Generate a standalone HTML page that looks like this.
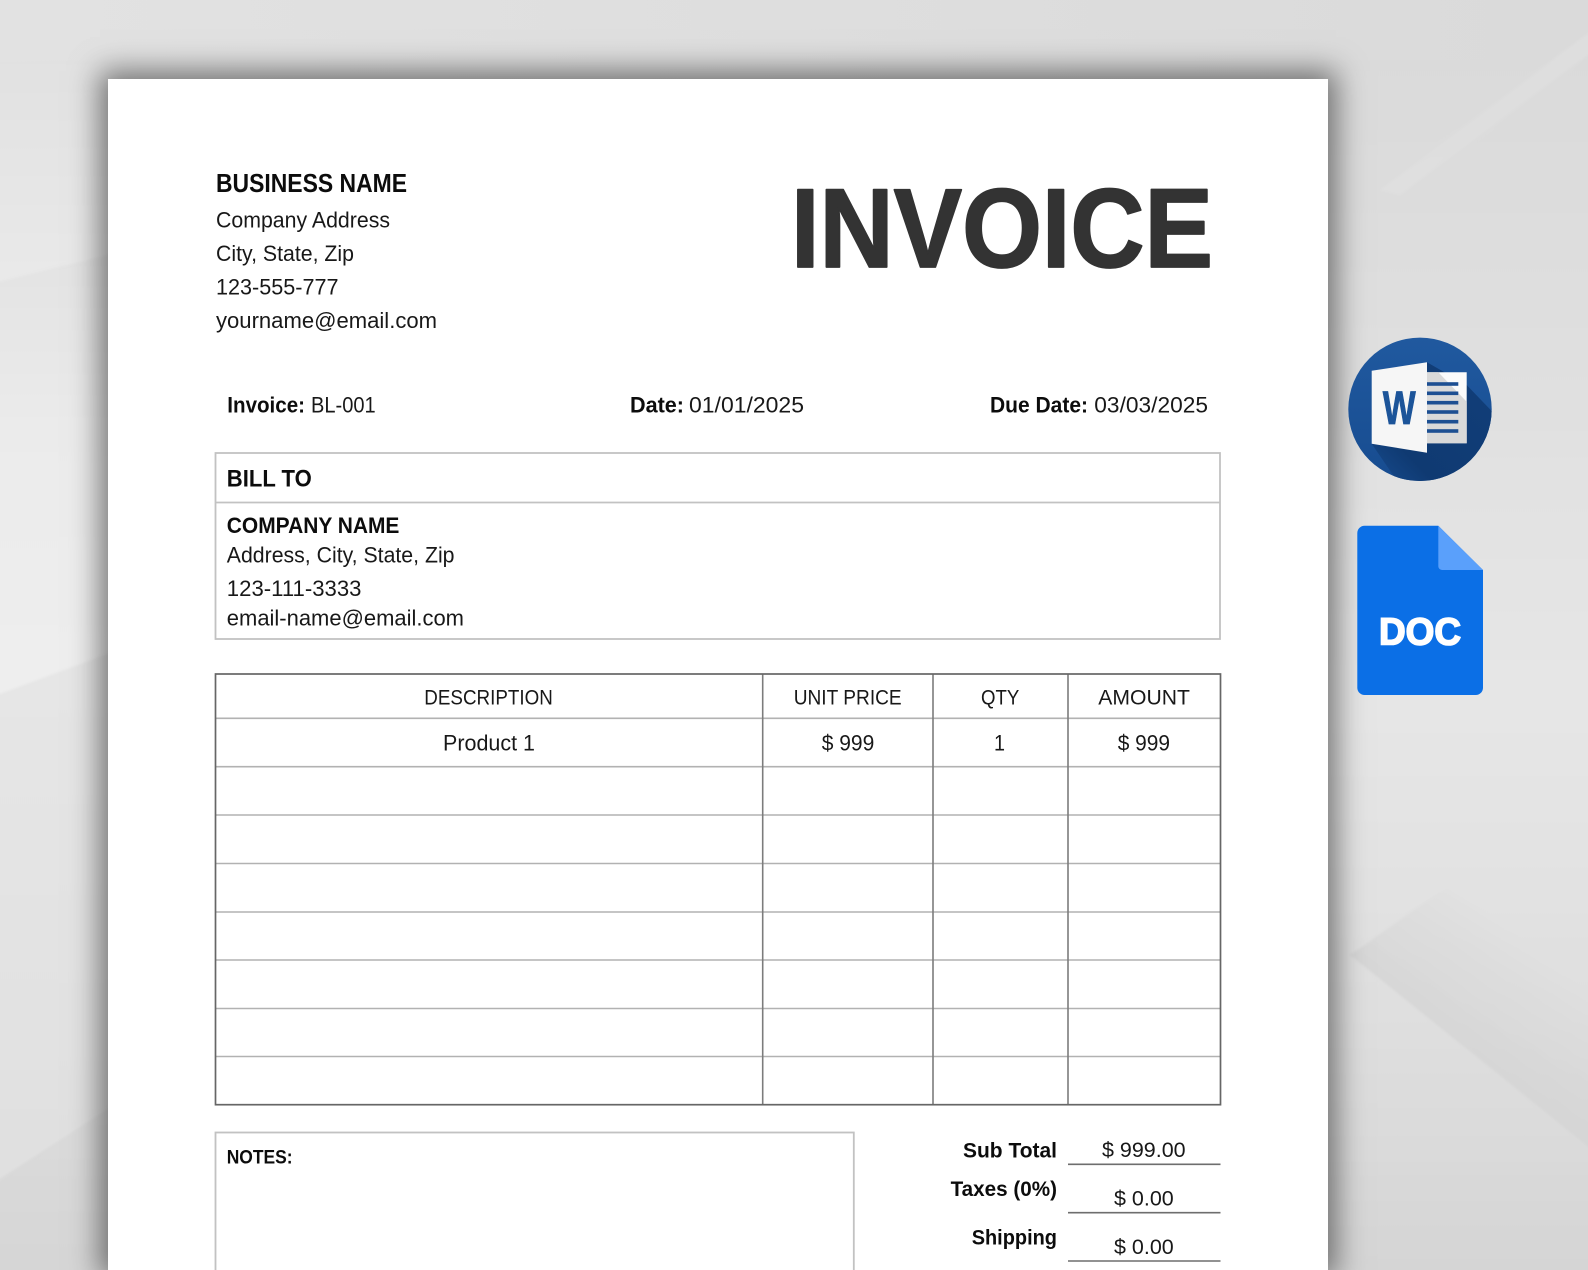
<!DOCTYPE html>
<html lang="en">
<head>
<meta charset="utf-8">
<title>Invoice</title>
<style>
html,body{margin:0;padding:0;width:1588px;height:1270px;overflow:hidden;background:#e0e0e0}
#stage{position:relative;width:1588px;height:1270px;overflow:hidden}
svg{display:block;position:absolute;left:0;top:0}
#paper{position:absolute;left:107.5px;top:79px;width:1220.5px;height:1191px;background:#fff;box-shadow:0 0 28px 8px rgba(0,0,0,.5)}
#bg{z-index:0}#fg{z-index:2}#paper{z-index:1}
text{font-family:"Liberation Sans",sans-serif;fill:#181818;font-size:22.5px}
.b{font-weight:700;fill:#0c0c0c}
</style>
</head>
<body>
<div id="stage">
<svg id="bg" width="1588" height="1270" viewBox="0 0 1588 1270" xmlns="http://www.w3.org/2000/svg">
<defs>
<linearGradient id="top" x1="0" y1="0" x2="1" y2="0"><stop offset="0" stop-color="#e2e2e2"/><stop offset="1" stop-color="#dadada"/></linearGradient>
<linearGradient id="l1" gradientUnits="userSpaceOnUse" x1="0" y1="0" x2="0" y2="282"><stop offset="0" stop-color="#dfdfdf"/><stop offset="1" stop-color="#e9e9e9"/></linearGradient>
<linearGradient id="l2" gradientUnits="userSpaceOnUse" x1="0" y1="260" x2="0" y2="690"><stop offset="0" stop-color="#e3e3e3"/><stop offset=".4" stop-color="#ebebeb"/><stop offset="1" stop-color="#eeeeee"/></linearGradient>
<linearGradient id="l3" gradientUnits="userSpaceOnUse" x1="0" y1="650" x2="0" y2="1178"><stop offset="0" stop-color="#e6e6e6"/><stop offset="1" stop-color="#e0e0e0"/></linearGradient>
<linearGradient id="l4" gradientUnits="userSpaceOnUse" x1="0" y1="1100" x2="0" y2="1270"><stop offset="0" stop-color="#dbdbdb"/><stop offset="1" stop-color="#d6d6d6"/></linearGradient>
<linearGradient id="r1" gradientUnits="userSpaceOnUse" x1="0" y1="0" x2="0" y2="1270"><stop offset="0" stop-color="#d9d9d9"/><stop offset=".27" stop-color="#dfdfdf"/><stop offset=".55" stop-color="#e6e6e6"/><stop offset=".8" stop-color="#dfdfdf"/><stop offset="1" stop-color="#d5d5d5"/></linearGradient>
<linearGradient id="dg" gradientUnits="userSpaceOnUse" x1="1470" y1="1083" x2="1560" y2="970"><stop offset="0" stop-color="#d5d5d5" stop-opacity="1"/><stop offset="1" stop-color="#d5d5d5" stop-opacity="0"/></linearGradient>
<filter id="soft" x="-5%" y="-5%" width="110%" height="110%"><feGaussianBlur stdDeviation="1.2"/></filter>
</defs>
<rect width="1588" height="1270" fill="#dedede"/>
<rect x="0" y="0" width="1588" height="80" fill="url(#top)"/>
<g filter="url(#soft)">
<polygon points="-5,60 140,60 140,247 -5,283" fill="url(#l1)"/>
<polygon points="-5,283 140,247 140,642 -5,696" fill="url(#l2)"/>
<polygon points="-5,696 140,642 140,1088 -5,1182" fill="url(#l3)"/>
<polygon points="-5,1182 140,1088 140,1275 -5,1275" fill="url(#l4)"/>
<rect x="1320" y="60" width="273" height="1215" fill="url(#r1)"/>
<polygon points="1380,190 1595,28 1595,50 1400,195" fill="#e4e4e4" opacity=".35"/>
<polygon points="1350,955 1595,1152 1595,850 1500,850" fill="url(#dg)"/>
</g>
</svg>

<div id="paper"></div>

<svg id="fg" width="1588" height="1270" viewBox="0 0 1588 1270" xmlns="http://www.w3.org/2000/svg">
<defs>
<clipPath id="circ"><circle cx="1420" cy="409.3" r="71.7"/></clipPath>
<linearGradient id="cg" x1="0" y1="0" x2="0" y2="1"><stop offset="0" stop-color="#20599f"/><stop offset="1" stop-color="#174c90"/></linearGradient>
<linearGradient id="sh" x1="0" y1="1" x2="1" y2="0"><stop offset="0" stop-color="#1a5198"/><stop offset=".3" stop-color="#0f3a72"/><stop offset="1" stop-color="#123f7a"/></linearGradient>
</defs>

<!-- Header -->
<text class="b" x="216" y="192" style="font-size:25.5px" textLength="191" lengthAdjust="spacingAndGlyphs">BUSINESS NAME</text>
<text x="216" y="227.7" textLength="174" lengthAdjust="spacingAndGlyphs">Company Address</text>
<text x="216" y="261" textLength="138" lengthAdjust="spacingAndGlyphs">City, State, Zip</text>
<text x="216" y="294.7" textLength="122.5" lengthAdjust="spacingAndGlyphs">123-555-777</text>
<text x="216" y="328" textLength="221" lengthAdjust="spacingAndGlyphs">yourname@email.com</text>

<text class="b" x="791" y="267" textLength="422" lengthAdjust="spacingAndGlyphs" style="font-size:112px;fill:#333;stroke:#333;stroke-width:1.8;stroke-linejoin:round">INVOICE</text>

<!-- Meta row -->
<text class="b" x="227.3" y="412.7" textLength="77.7" lengthAdjust="spacingAndGlyphs">Invoice:</text>
<text x="311" y="412.7" textLength="64.7" lengthAdjust="spacingAndGlyphs">BL-001</text>
<text class="b" x="630" y="412.7" textLength="54" lengthAdjust="spacingAndGlyphs">Date:</text>
<text x="689" y="412.7" textLength="115" lengthAdjust="spacingAndGlyphs">01/01/2025</text>
<text class="b" x="990" y="412.7" textLength="98" lengthAdjust="spacingAndGlyphs">Due Date:</text>
<text x="1094.3" y="412.7" textLength="113.7" lengthAdjust="spacingAndGlyphs">03/03/2025</text>

<!-- Bill to -->
<g fill="none" stroke="#c2c2c2" stroke-width="1.8">
<rect x="215.5" y="453" width="1004.5" height="186"/>
<line x1="215.5" y1="502.5" x2="1220" y2="502.5"/>
</g>
<text class="b" x="226.8" y="486.7" style="font-size:24.5px" textLength="85" lengthAdjust="spacingAndGlyphs">BILL TO</text>
<text class="b" x="226.8" y="533" textLength="172.6" lengthAdjust="spacingAndGlyphs">COMPANY NAME</text>
<text x="226.8" y="562.3" textLength="227.7" lengthAdjust="spacingAndGlyphs">Address, City, State, Zip</text>
<text x="226.8" y="596" textLength="134.7" lengthAdjust="spacingAndGlyphs">123-111-3333</text>
<text x="226.8" y="625.3" textLength="237.2" lengthAdjust="spacingAndGlyphs">email-name@email.com</text>

<!-- Table -->
<g fill="none" stroke="#b2b2b2" stroke-width="1.6">
<line x1="215.5" y1="718.3" x2="1220.5" y2="718.3"/>
<line x1="215.5" y1="766.7" x2="1220.5" y2="766.7"/>
<line x1="215.5" y1="815" x2="1220.5" y2="815"/>
<line x1="215.5" y1="863.5" x2="1220.5" y2="863.5"/>
<line x1="215.5" y1="912" x2="1220.5" y2="912"/>
<line x1="215.5" y1="960" x2="1220.5" y2="960"/>
<line x1="215.5" y1="1008.5" x2="1220.5" y2="1008.5"/>
<line x1="215.5" y1="1056.5" x2="1220.5" y2="1056.5"/>
</g>
<g fill="none" stroke="#7c7c7c" stroke-width="1.6">
<line x1="762.7" y1="674" x2="762.7" y2="1104.7"/>
<line x1="933" y1="674" x2="933" y2="1104.7"/>
<line x1="1068" y1="674" x2="1068" y2="1104.7"/>
</g>
<rect x="215.5" y="674" width="1005" height="430.7" fill="none" stroke="#666" stroke-width="1.7"/>

<text x="424.3" y="704.3" style="font-size:21.5px" textLength="128.5" lengthAdjust="spacingAndGlyphs">DESCRIPTION</text>
<text x="793.7" y="704.3" style="font-size:21.5px" textLength="108" lengthAdjust="spacingAndGlyphs">UNIT PRICE</text>
<text x="981" y="704.3" style="font-size:21.5px" textLength="38.3" lengthAdjust="spacingAndGlyphs">QTY</text>
<text x="1098.3" y="704.3" style="font-size:21.5px" textLength="91.7" lengthAdjust="spacingAndGlyphs">AMOUNT</text>
<text x="443" y="750.7" textLength="92" lengthAdjust="spacingAndGlyphs">Product 1</text>
<text x="821.7" y="750.7" textLength="52.6" lengthAdjust="spacingAndGlyphs">$ 999</text>
<text x="994" y="750.7" textLength="11" lengthAdjust="spacingAndGlyphs">1</text>
<text x="1117.7" y="750.7" textLength="52.3" lengthAdjust="spacingAndGlyphs">$ 999</text>

<!-- Notes -->
<rect x="215.5" y="1132.5" width="638.3" height="200" fill="none" stroke="#c2c2c2" stroke-width="1.8"/>
<text class="b" x="226.7" y="1163.3" style="font-size:19px" textLength="65.9" lengthAdjust="spacingAndGlyphs">NOTES:</text>

<!-- Totals -->
<text class="b" x="963" y="1157.7" style="font-size:21.5px" textLength="94" lengthAdjust="spacingAndGlyphs">Sub Total</text>
<text x="1102" y="1157" style="font-size:21.5px" textLength="83.6" lengthAdjust="spacingAndGlyphs">$ 999.00</text>
<line x1="1068" y1="1164.3" x2="1220.5" y2="1164.3" stroke="#6e6e6e" stroke-width="1.6"/>
<text class="b" x="950.6" y="1196" style="font-size:21.5px" textLength="106.4" lengthAdjust="spacingAndGlyphs">Taxes (0%)</text>
<text x="1114" y="1205.3" style="font-size:21.5px" textLength="59.7" lengthAdjust="spacingAndGlyphs">$ 0.00</text>
<line x1="1068" y1="1212.7" x2="1220.5" y2="1212.7" stroke="#6e6e6e" stroke-width="1.6"/>
<text class="b" x="971.7" y="1244.3" style="font-size:21.5px" textLength="85.3" lengthAdjust="spacingAndGlyphs">Shipping</text>
<text x="1114" y="1254" style="font-size:21.5px" textLength="59.7" lengthAdjust="spacingAndGlyphs">$ 0.00</text>
<line x1="1068" y1="1261" x2="1220.5" y2="1261" stroke="#6e6e6e" stroke-width="1.6"/>

<!-- Word icon -->
<circle cx="1420" cy="409.3" r="71.7" fill="url(#cg)"/>
<g clip-path="url(#circ)">
<polygon points="1371.7,443.7 1427,362.3 1466.7,385 1505,425 1505,500 1410,500" fill="url(#sh)"/>
</g>
<polygon points="1427,372.3 1466.7,372.3 1466.7,443.3 1427,443.3" fill="#fbfbfb"/>
<polygon points="1427,372.3 1438.3,372.3 1466.7,401.7 1466.7,443.3 1427,443.3" fill="#d9d9d9"/>
<g fill="#1d4f92">
<rect x="1427" y="382.2" width="31.3" height="3.6"/>
<rect x="1427" y="391.5" width="31.3" height="3.6"/>
<rect x="1427" y="400.9" width="31.3" height="3.6"/>
<rect x="1427" y="410.2" width="31.3" height="3.6"/>
<rect x="1427" y="419.9" width="31.3" height="3.6"/>
<rect x="1427" y="429.2" width="31.3" height="3.6"/>
</g>
<polygon points="1371.7,370.7 1427,362.3 1427,452.7 1371.7,443.7" fill="#f6f6f6"/>
<text x="1382.7" y="424" style="font-size:47px;font-weight:700;fill:#1c5499;stroke:#1c5499;stroke-width:.8" textLength="33" lengthAdjust="spacingAndGlyphs">W</text>

<!-- DOC icon -->
<path d="M1357.3,533 a7.3,7.3 0 0 1 7.3,-7.3 H1438.3 L1483,570 V687.7 a7.3,7.3 0 0 1 -7.3,7.3 H1364.6 a7.3,7.3 0 0 1 -7.3,-7.3 Z" fill="#0b6fe6"/>
<path d="M1438.3,525.7 L1483,570 H1442 a3.7,3.7 0 0 1 -3.7,-3.7 Z" fill="#5aa0fb"/>
<text x="1379" y="644.3" style="font-size:38px;font-weight:700;fill:#fff;stroke:#fff;stroke-width:1.6" textLength="82" lengthAdjust="spacingAndGlyphs">DOC</text>
</svg>
</div>
</body>
</html>
